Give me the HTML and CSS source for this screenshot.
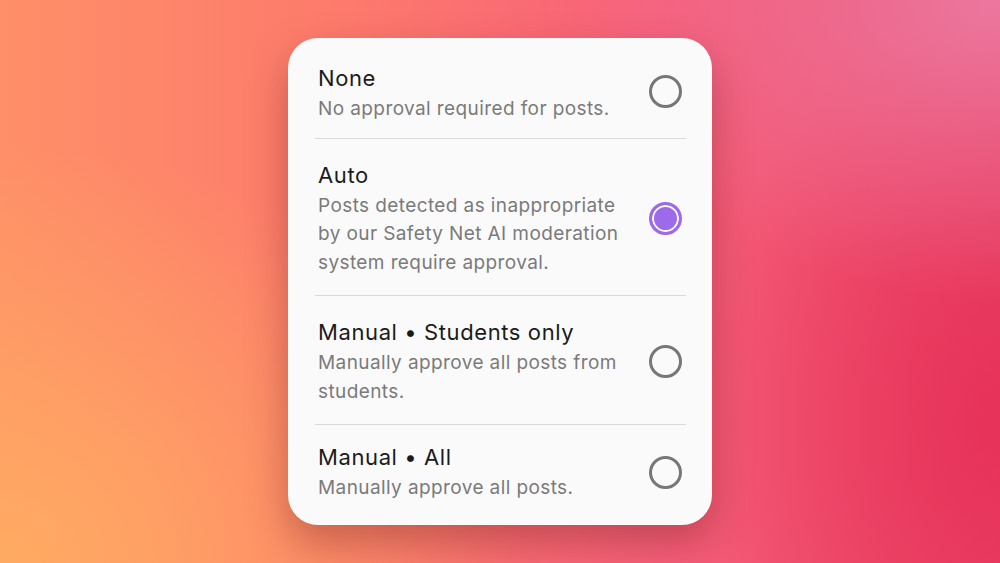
FILE: index.html
```html
<!DOCTYPE html>
<html lang="en">
<head>
    <meta charset="UTF-8">
    <meta name="viewport" content="width=device-width, initial-scale=1.0">
    <title>Post approval</title>
    <link rel="stylesheet" href="styles.css">
</head>
<body>
    <div class="approval-card">
        <label class="option first">
            <div class="option-text">
                <h2 class="option-title">None</h2>
                <p class="option-desc">No approval required for posts.</p>
            </div>
            <span class="radio"></span>
        </label>

        <label class="option">
            <div class="option-text">
                <h2 class="option-title">Auto</h2>
                <p class="option-desc">Posts detected as inappropriate by our Safety Net AI moderation system require approval.</p>
            </div>
            <span class="radio checked"></span>
        </label>

        <label class="option">
            <div class="option-text">
                <h2 class="option-title">Manual • Students only</h2>
                <p class="option-desc">Manually approve all posts from students.</p>
            </div>
            <span class="radio"></span>
        </label>

        <label class="option last">
            <div class="option-text">
                <h2 class="option-title">Manual • All</h2>
                <p class="option-desc">Manually approve all posts.</p>
            </div>
            <span class="radio"></span>
        </label>
    </div>
</body>
</html>
```

FILE: styles.css
```css
* {
    margin: 0;
    padding: 0;
    box-sizing: border-box;
    font-family: 'Inter', 'Noto Sans', sans-serif;
}

body {
    width: 1000px;
    height: 563px;
    overflow: hidden;
    display: flex;
    justify-content: center;
    align-items: flex-start;
    padding-top: 38px;
    background:
        radial-gradient(ellipse 420px 300px at 100% 0%, rgba(236, 125, 165, 0.9), transparent),
        radial-gradient(ellipse 520px 420px at 0% 100%, rgba(255, 172, 98, 0.95), transparent),
        radial-gradient(ellipse 300px 400px at 100% 75%, rgba(230, 45, 85, 0.8), transparent),
        linear-gradient(90deg, #fe8f68 0%, #fd7a6c 35%, #f7607a 65%, #ea4466 100%);
}

.approval-card {
    width: 424px;
    background: #fafafa;
    border-radius: 30px;
    padding: 2px 26px 2px 27px;
    box-shadow: 0 18px 40px rgba(110, 30, 30, 0.38);
}

.option {
    display: flex;
    align-items: center;
    gap: 24px;
    padding: 21px 4px 18px 3px;
    border-bottom: 1px solid #d9d9d9;
}

.option.first {
    padding-top: 23px;
    padding-bottom: 14px;
}

.option.last {
    border-bottom: none;
    padding-top: 17px;
    padding-bottom: 20px;
}

.option-text {
    flex: 1;
}

.option-title {
    font-size: 22px;
    font-weight: 400;
    line-height: 30px;
    letter-spacing: 0.6px;
    color: #1b1b1b;
}

.option-desc {
    margin-top: 2px;
    font-size: 19px;
    line-height: 28.5px;
    letter-spacing: 0.4px;
    color: #7a7a7a;
}

.radio {
    flex-shrink: 0;
    width: 33px;
    height: 33px;
    border: 3px solid #777;
    border-radius: 50%;
}

.option.first .radio {
    margin-top: -4px;
}

.radio.checked {
    border-color: #9d6aea;
    background: #9d6aea;
    box-shadow: inset 0 0 0 2px #fff;
}
```
